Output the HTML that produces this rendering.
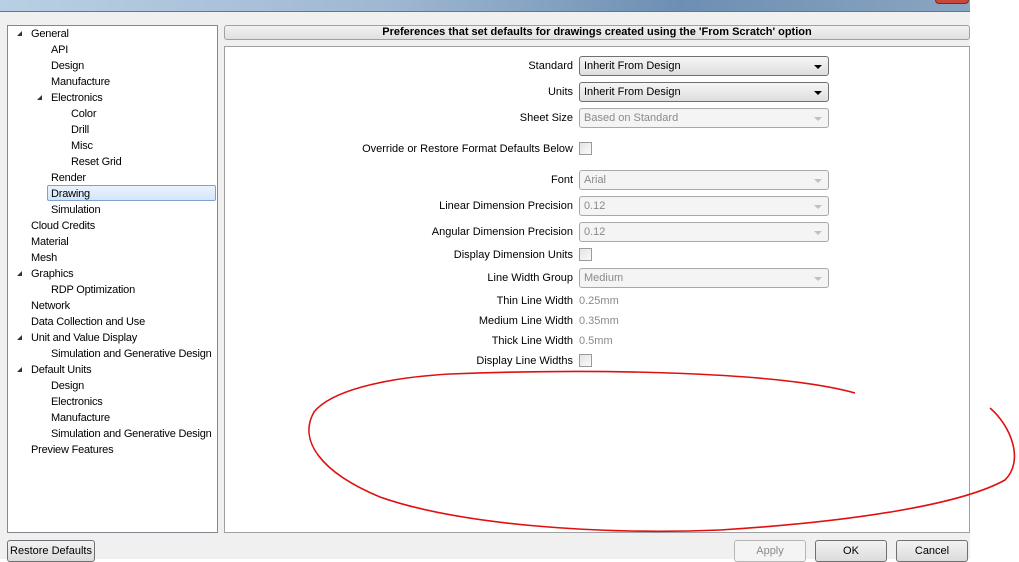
<!DOCTYPE html>
<html><head><style>
*{margin:0;padding:0;box-sizing:border-box}
body{width:1019px;height:559px;background:#fff;position:relative;overflow:hidden;font-family:"Liberation Sans",sans-serif;font-size:11px;color:#000}
.win{position:absolute;left:0;top:0;width:970px;height:559px;background:#f0f0f0}
.title{position:absolute;left:0;top:0;width:970px;height:12px;background:linear-gradient(90deg,#b9cfe4,#9fb8d2 40%,#6d8fb3 70%,#8aa5c1);border-bottom:1px solid #5d7890}
.close{position:absolute;left:935px;top:-6px;width:34px;height:10px;background:#c7483b;border:1px solid #7a2a22;border-radius:0 0 4px 4px}
.tree{position:absolute;left:7px;top:25px;width:211px;height:508px;background:#fff;border:1px solid #828790}
.ti{position:absolute;height:14px;line-height:14px;white-space:nowrap;letter-spacing:-0.2px}
.arr{position:absolute;width:0;height:0;border-left:5px solid transparent;border-bottom:5px solid #333}
.sel{position:absolute;left:47px;top:185px;width:169px;height:16px;background:linear-gradient(#eaf3fd,#d4e6fa);border:1px solid #7da2ce;border-radius:2px}
.hdr{position:absolute;left:224px;top:25px;width:746px;height:15px;background:linear-gradient(#f2f2f2,#e0e0e0);border:1px solid #a0a0a0;border-radius:3px;text-align:center;font-weight:bold;line-height:13px}
.pane{position:absolute;left:224px;top:46px;width:746px;height:487px;background:#fff;border:1px solid #a0a0a0}
.lbl{position:absolute;right:397px;height:14px;line-height:14px;white-space:nowrap;text-align:right}
.cb{position:absolute;left:579px;width:13px;height:13px;border:1px solid #9a9a9a;background:linear-gradient(135deg,#e4e4e4,#fafafa)}
.dd{position:absolute;left:579px;width:250px;height:20px;border:1px solid #a8a8a8;border-radius:3px;background:#f4f4f4;color:#8a8a8a;padding-left:4px;line-height:18px}
.dd.on{border-color:#707070;background:linear-gradient(#f6f6f6,#dedede);color:#000}
.dd:after{content:"";position:absolute;right:6px;top:8px;border-left:4px solid transparent;border-right:4px solid transparent;border-top:4px solid #c0c0c0}
.dd.on:after{border-top-color:#000}
.val{position:absolute;left:579px;color:#8a8a8a;height:14px;line-height:14px}
.btn{position:absolute;top:540px;height:22px;border:1px solid #707070;border-radius:3px;background:linear-gradient(#f2f2f2,#dcdcdc);text-align:center;line-height:20px}
</style></head><body>
<div class="win">
<div class="title"><div class="close"></div></div>
<div class="tree"></div>
<div class="sel"></div>
<div class="arr" style="left:17px;top:31px"></div>
<div class="arr" style="left:37px;top:95px"></div>
<div class="arr" style="left:17px;top:271px"></div>
<div class="arr" style="left:17px;top:335px"></div>
<div class="arr" style="left:17px;top:367px"></div>
<div class="ti" style="left:31px;top:27px">General</div>
<div class="ti" style="left:51px;top:43px">API</div>
<div class="ti" style="left:51px;top:59px">Design</div>
<div class="ti" style="left:51px;top:75px">Manufacture</div>
<div class="ti" style="left:51px;top:91px">Electronics</div>
<div class="ti" style="left:71px;top:107px">Color</div>
<div class="ti" style="left:71px;top:123px">Drill</div>
<div class="ti" style="left:71px;top:139px">Misc</div>
<div class="ti" style="left:71px;top:155px">Reset Grid</div>
<div class="ti" style="left:51px;top:171px">Render</div>
<div class="ti" style="left:51px;top:187px">Drawing</div>
<div class="ti" style="left:51px;top:203px">Simulation</div>
<div class="ti" style="left:31px;top:219px">Cloud Credits</div>
<div class="ti" style="left:31px;top:235px">Material</div>
<div class="ti" style="left:31px;top:251px">Mesh</div>
<div class="ti" style="left:31px;top:267px">Graphics</div>
<div class="ti" style="left:51px;top:283px">RDP Optimization</div>
<div class="ti" style="left:31px;top:299px">Network</div>
<div class="ti" style="left:31px;top:315px">Data Collection and Use</div>
<div class="ti" style="left:31px;top:331px">Unit and Value Display</div>
<div class="ti" style="left:51px;top:347px">Simulation and Generative Design</div>
<div class="ti" style="left:31px;top:363px">Default Units</div>
<div class="ti" style="left:51px;top:379px">Design</div>
<div class="ti" style="left:51px;top:395px">Electronics</div>
<div class="ti" style="left:51px;top:411px">Manufacture</div>
<div class="ti" style="left:51px;top:427px">Simulation and Generative Design</div>
<div class="ti" style="left:31px;top:443px">Preview Features</div>

<div class="hdr">Preferences that set defaults for drawings created using the 'From Scratch' option</div>
<div class="pane"></div>
<div class="lbl" style="top:59px">Standard</div><div class="dd on" style="top:56px">Inherit From Design</div>
<div class="lbl" style="top:85px">Units</div><div class="dd on" style="top:82px">Inherit From Design</div>
<div class="lbl" style="top:111px">Sheet Size</div><div class="dd" style="top:108px">Based on Standard</div>
<div class="lbl" style="top:142px">Override or Restore Format Defaults Below</div><div class="cb" style="top:142px"></div>
<div class="lbl" style="top:173px">Font</div><div class="dd" style="top:170px">Arial</div>
<div class="lbl" style="top:199px">Linear Dimension Precision</div><div class="dd" style="top:196px">0.12</div>
<div class="lbl" style="top:225px">Angular Dimension Precision</div><div class="dd" style="top:222px">0.12</div>
<div class="lbl" style="top:248px">Display Dimension Units</div><div class="cb" style="top:248px"></div>
<div class="lbl" style="top:271px">Line Width Group</div><div class="dd" style="top:268px">Medium</div>
<div class="lbl" style="top:294px">Thin Line Width</div><div class="val" style="top:294px">0.25mm</div>
<div class="lbl" style="top:314px">Medium Line Width</div><div class="val" style="top:314px">0.35mm</div>
<div class="lbl" style="top:334px">Thick Line Width</div><div class="val" style="top:334px">0.5mm</div>
<div class="lbl" style="top:354px">Display Line Widths</div><div class="cb" style="top:354px"></div>

<div class="btn" style="left:7px;width:88px">Restore Defaults</div>
<div class="btn" style="left:734px;width:72px;border-color:#b5b5b5;background:#f4f4f4;color:#8a8a8a">Apply</div>
<div class="btn" style="left:815px;width:72px">OK</div>
<div class="btn" style="left:896px;width:72px">Cancel</div>
</div>
<svg style="position:absolute;left:0;top:0" width="1019" height="559">
<path d="M855,393 C780,372 600,368 450,374 C380,378 330,392 314,412 C298,440 320,472 380,497 C460,525 600,535 720,530 C850,522 960,505 1005,480 C1025,460 1010,425 990,408" fill="none" stroke="#e01010" stroke-width="1.6"/>
</svg>
</body></html>
